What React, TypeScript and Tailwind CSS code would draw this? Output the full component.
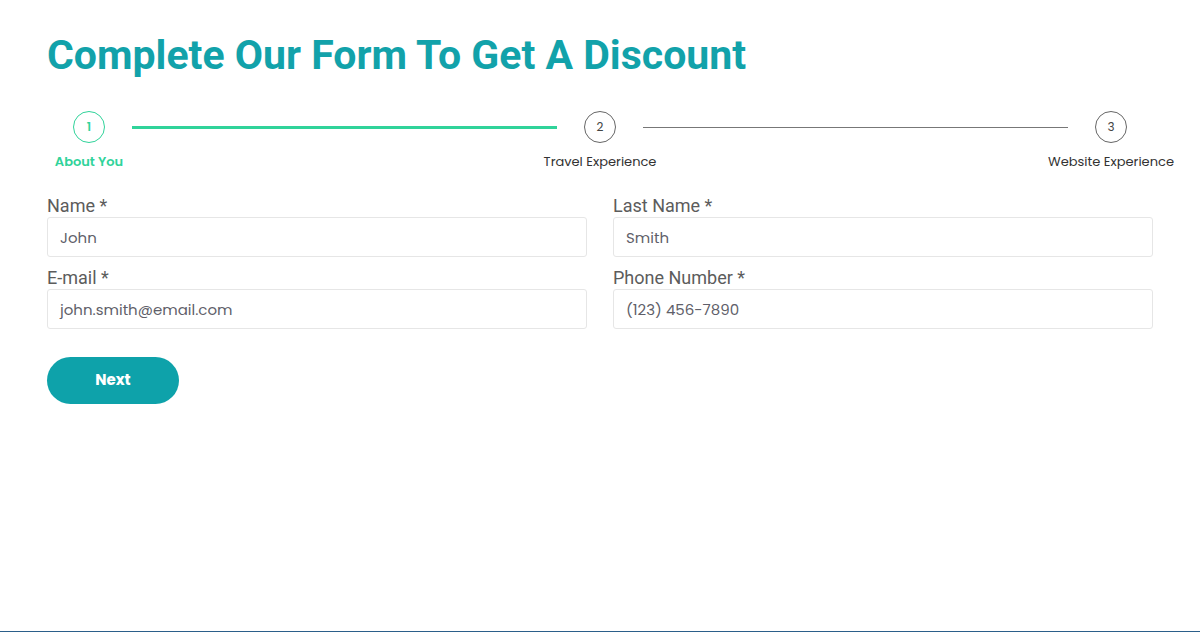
import React from 'react';

const STEPS = [
  { n: 1, label: 'About You' },
  { n: 2, label: 'Travel Experience' },
  { n: 3, label: 'Website Experience' },
];

const FIELDS = [
  { label: 'Name *', value: 'John' },
  { label: 'Last Name *', value: 'Smith' },
  { label: 'E-mail *', value: 'john.smith@email.com' },
  { label: 'Phone Number *', value: '(123) 456-7890' },
];

const poppins = "font-['Poppins','Open_Sans',sans-serif]";

function Step({ n, label, active }: { n: number; label: string; active: boolean }) {
  return (
    <div className="w-[84px] shrink-0 flex flex-col items-center">
      <div
        className={`w-8 h-8 rounded-full border flex items-center justify-center text-[12px] ${poppins} ${
          active ? 'border-[#30d39a] text-[#30d39a] font-semibold' : 'border-[#666] text-[#444]'
        }`}
      >
        {n}
      </div>
      <div
        className={`mt-[11px] whitespace-nowrap text-[13px] leading-[16px] ${poppins} ${
          active ? 'text-[#30d39a] font-semibold' : 'text-[#333]'
        }`}
      >
        {label}
      </div>
    </div>
  );
}

export default function App() {
  return (
    <div className="h-[632px] bg-white border-b border-[#2b5f8a] flex flex-col">
      <div className="px-[47px] pt-[31px]">
        <h1 className="font-['Roboto',sans-serif] font-bold text-[41px] leading-[48px] text-[#12a2aa]">
          Complete Our Form To Get A Discount
        </h1>

        {/* stepper */}
        <div className="mt-[32px] w-[1106px] flex items-start">
          <Step n={STEPS[0].n} label={STEPS[0].label} active />
          <div className="flex-1 mt-[15px] h-[3px] bg-[#30d39a] mx-px" />
          <Step n={STEPS[1].n} label={STEPS[1].label} active={false} />
          <div className="flex-1 mt-[16px] h-px bg-[#777] mx-px" />
          <Step n={STEPS[2].n} label={STEPS[2].label} active={false} />
        </div>

        {/* form */}
        <div className="mt-[25px] w-[1106px] grid grid-cols-2 gap-x-[26px] gap-y-[10px]">
          {FIELDS.map((f) => (
            <div key={f.label} className="flex flex-col">
              <label className="font-['Roboto',sans-serif] text-[18px] leading-[22px] text-[#5c5c5c]">
                {f.label}
              </label>
              <div
                className={`h-10 border border-[#e6e6e6] rounded-[3px] px-3 pt-[2px] flex items-center text-[15px] text-[#5f5f6a] ${poppins}`}
              >
                {f.value}
              </div>
            </div>
          ))}
        </div>

        <button
          className={`mt-[28px] w-[132px] h-[47px] rounded-full bg-[#0ea2aa] text-white text-[15px] font-bold ${poppins}`}
        >
          Next
        </button>
      </div>
    </div>
  );
}
